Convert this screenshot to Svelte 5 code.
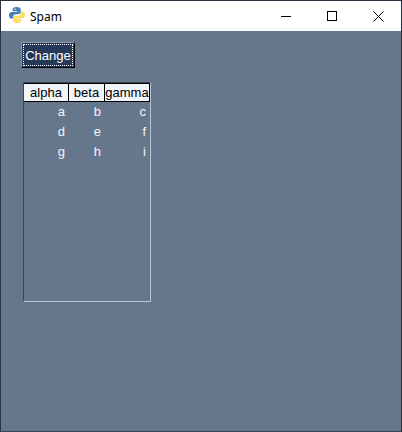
<script>
  const columns = [
    { title: 'alpha', width: 45 },
    { title: 'beta', width: 36 },
    { title: 'gamma', width: 45 }
  ];
  const rows = [
    ['a', 'b', 'c'],
    ['d', 'e', 'f'],
    ['g', 'h', 'i']
  ];
</script>

<div class="window">
  <div class="titlebar">
    <svg class="logo" width="16" height="16" viewBox="0 0 16 16">
      <path fill="#4382b8" d="M7.8 0C4.6 0 3.6 1 3.6 2.6V4.2H8V5H2.6C0.9 5 0 6.3 0 8.2C0 10.2 0.9 11.6 2.6 11.6H4.2V9.6C4.2 8.2 5.3 7.2 6.6 7.2H9.6C10.9 7.2 11.8 6.3 11.8 5V2.6C11.8 1 10.6 0 7.8 0Z" />
      <path fill="#ffdd5c" d="M8.2 16C11.4 16 12.4 15 12.4 13.4V11.8H8V11H13.4C15.1 11 16 9.7 16 7.8C16 5.8 15.1 4.4 13.4 4.4H11.8V6.4C11.8 7.8 10.7 8.8 9.4 8.8H6.4C5.1 8.8 4.2 9.7 4.2 11V13.4C4.2 15 5.4 16 8.2 16Z" />
      <circle cx="6" cy="2.2" r="0.8" fill="#dce9f4" />
      <circle cx="10" cy="13.8" r="0.8" fill="#fff8dc" />
    </svg>
    <span class="title">Spam</span>
    <div class="controls">
      <span class="control">
        <svg width="10" height="10" viewBox="0 0 10 10"><path d="M0 5.5H10" stroke="#000" fill="none" /></svg>
      </span>
      <span class="control">
        <svg width="10" height="10" viewBox="0 0 10 10"><rect x="0.5" y="0.5" width="9" height="9" stroke="#000" fill="none" /></svg>
      </span>
      <span class="control">
        <svg width="11" height="11" viewBox="0 0 11 11"><path d="M0.5 0.5L10.5 10.5M10.5 0.5L0.5 10.5" stroke="#000" fill="none" /></svg>
      </span>
    </div>
  </div>

  <div class="content">
    <button class="change"><span class="focus">Change</span></button>

    <div class="table">
      <div class="header">
        {#each columns as col}
          <div class="head-cell" style="width:{col.width}px">{col.title}</div>
        {/each}
      </div>
      {#each rows as row}
        <div class="row">
          {#each row as cell, i}
            <div class="cell" style="width:{columns[i].width}px">{cell}</div>
          {/each}
        </div>
      {/each}
    </div>
  </div>
</div>

<style>
  :global(body) {
    margin: 0;
  }

  .window {
    box-sizing: border-box;
    width: 402px;
    height: 432px;
    display: flex;
    flex-direction: column;
    border: 1px solid #2b3440;
    border-bottom-color: #3a4656;
    background: #66778c;
    font-family: "Liberation Sans", Arial, sans-serif;
    font-size: 13px;
    overflow: hidden;
  }

  .titlebar {
    display: flex;
    align-items: center;
    height: 30px;
    flex: none;
    background: #fff;
    color: #000;
  }

  .logo {
    margin: -2px 0 0 8px;
  }

  .title {
    margin-left: 5px;
    font-size: 12px;
    font-family: "Noto Sans", "Liberation Sans", sans-serif;
  }

  .controls {
    display: flex;
    margin-left: auto;
  }

  .control {
    width: 46px;
    height: 30px;
    display: flex;
    align-items: center;
    justify-content: center;
  }

  .content {
    padding: 11px 0 0 20px;
  }

  .change {
    display: block;
    box-sizing: border-box;
    width: 54px;
    height: 26px;
    padding: 1px;
    background: #253858;
    color: #fff;
    border: 1px solid;
    border-color: #8a97a8 #000 #000 #8a97a8;
    font: inherit;
  }

  .focus {
    display: flex;
    align-items: center;
    justify-content: center;
    height: 100%;
    box-sizing: border-box;
    border: 1px dotted #fff;
  }

  .table {
    box-sizing: border-box;
    width: 128px;
    height: 220px;
    margin: 14px 0 0 2px;
    border: 1px solid;
    border-color: #3a4656 #b8c4d4 #b8c4d4 #3a4656;
  }

  .header {
    display: flex;
    height: 19px;
  }

  .head-cell {
    box-sizing: border-box;
    flex: none;
    background: #f1f5f9;
    color: #000;
    text-align: center;
    line-height: 17px;
    border: 1px solid #000;
    border-left: none;
  }

  .row {
    display: flex;
    height: 20px;
    color: #f1f5f9;
  }

  .cell {
    box-sizing: border-box;
    flex: none;
    text-align: right;
    padding-right: 4px;
    line-height: 19px;
  }
</style>
